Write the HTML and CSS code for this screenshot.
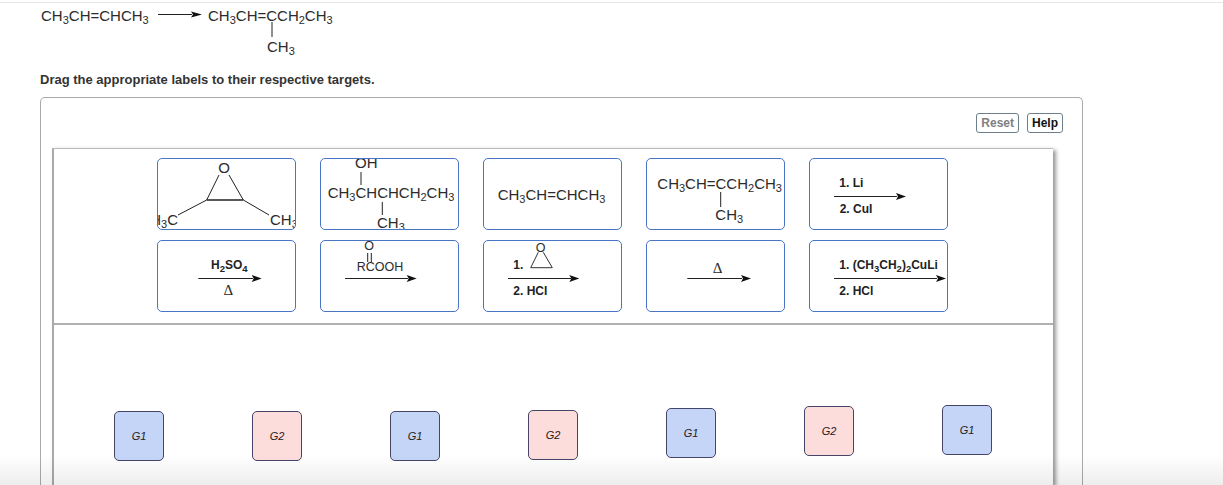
FILE: index.html
```html
<!DOCTYPE html>
<html lang="en">
<head>
    <meta charset="UTF-8">
    <meta name="viewport" content="width=device-width, initial-scale=1.0">
    <title>Drag the appropriate labels to their respective targets</title>
    <link rel="stylesheet" href="styles.css">
</head>
<body>
    <div class="topline"></div>

    <!-- reaction scheme -->
    <svg class="scheme chem" width="340" height="56" viewBox="0 0 340 56">
        <text x="1" y="18">CH<tspan class="sub" dy="3">3</tspan><tspan dy="-3">CH=CHCH</tspan><tspan class="sub" dy="3">3</tspan></text>
        <line x1="118" y1="11.5" x2="152" y2="11.5"/>
        <polygon class="head" points="151,8.5 162,11.5 151,14.5 153,11.5"/>
        <text x="168" y="18">CH<tspan class="sub" dy="3">3</tspan><tspan dy="-3">CH=CCH</tspan><tspan class="sub" dy="3">2</tspan><tspan dy="-3">CH</tspan><tspan class="sub" dy="3">3</tspan></text>
        <line x1="232" y1="19" x2="232" y2="34"/>
        <text x="227" y="49">CH<tspan class="sub" dy="3">3</tspan></text>
    </svg>

    <p class="prompt">Drag the appropriate labels to their respective targets.</p>

    <div class="panel">
        <div class="toolbar">
            <button class="btn btn-off">Reset</button>
            <button class="btn">Help</button>
        </div>

        <div class="board">
            <div class="targets">
                <div class="tile">
                    <svg class="chem" width="137" height="70" viewBox="0 0 137 70">
                        <text x="66" y="14" text-anchor="middle">O</text>
                        <line x1="61" y1="16" x2="48.7" y2="41"/>
                        <line x1="71" y1="16" x2="85.3" y2="41"/>
                        <line class="thick" x1="48.7" y1="41" x2="85.3" y2="41"/>
                        <line x1="48.7" y1="41" x2="20" y2="56"/>
                        <line x1="85.3" y1="41" x2="111" y2="56"/>
                        <text x="20" y="66" text-anchor="end">H<tspan class="sub" dy="3">3</tspan><tspan dy="-3">C</tspan></text>
                        <text x="112" y="66">CH<tspan class="sub" dy="3">3</tspan></text>
                    </svg>
                </div>
                <div class="tile">
                    <svg class="chem" width="137" height="70" viewBox="0 0 137 70">
                        <text x="34" y="9">OH</text>
                        <line x1="40" y1="13" x2="40" y2="26"/>
                        <text x="6.7" y="39">CH<tspan class="sub" dy="3">3</tspan><tspan dy="-3">CHCHCH</tspan><tspan class="sub" dy="3">2</tspan><tspan dy="-3">CH</tspan><tspan class="sub" dy="3">3</tspan></text>
                        <line x1="61.3" y1="43" x2="61.3" y2="56"/>
                        <text x="56" y="69">CH<tspan class="sub" dy="3">3</tspan></text>
                    </svg>
                </div>
                <div class="tile">
                    <svg class="chem" width="137" height="70" viewBox="0 0 137 70">
                        <text x="13.7" y="41">CH<tspan class="sub" dy="3">3</tspan><tspan dy="-3">CH=CHCH</tspan><tspan class="sub" dy="3">3</tspan></text>
                    </svg>
                </div>
                <div class="tile">
                    <svg class="chem" width="137" height="70" viewBox="0 0 137 70">
                        <text x="10.3" y="30">CH<tspan class="sub" dy="3">3</tspan><tspan dy="-3">CH=CCH</tspan><tspan class="sub" dy="3">2</tspan><tspan dy="-3">CH</tspan><tspan class="sub" dy="3">3</tspan></text>
                        <line x1="73.7" y1="33" x2="73.7" y2="48"/>
                        <text x="68.3" y="61">CH<tspan class="sub" dy="3">3</tspan></text>
                    </svg>
                </div>
                <div class="tile">
                    <svg class="chem" width="137" height="70" viewBox="0 0 137 70">
                        <text class="reagent" x="29.3" y="28">1. Li</text>
                        <line x1="24" y1="37.5" x2="87" y2="37.5"/>
                        <polygon class="head" points="86,34 96,37.5 86,41 88,37.5"/>
                        <text class="reagent" x="29.7" y="54">2. CuI</text>
                    </svg>
                </div>

                <div class="tile">
                    <svg class="chem" width="137" height="70" viewBox="0 0 137 70">
                        <text class="reagent" x="53" y="28">H<tspan class="sub-b" dy="3">2</tspan><tspan dy="-3">SO</tspan><tspan class="sub-b" dy="3">4</tspan></text>
                        <line x1="40.3" y1="37.5" x2="95" y2="37.5"/>
                        <polygon class="head" points="93.7,34 103.7,37.5 93.7,41 95.7,37.5"/>
                        <text class="delta" x="70.3" y="54" text-anchor="middle">Δ</text>
                    </svg>
                </div>
                <div class="tile">
                    <svg class="chem" width="137" height="70" viewBox="0 0 137 70">
                        <text class="acid" x="48" y="8.5" text-anchor="middle">O</text>
                        <line x1="46.7" y1="12" x2="46.7" y2="21"/>
                        <line x1="50.3" y1="12" x2="50.3" y2="21"/>
                        <text class="acid" x="35.7" y="29.7">RCOOH</text>
                        <line x1="24" y1="37.5" x2="87" y2="37.5"/>
                        <polygon class="head" points="85.7,34 95.7,37.5 85.7,41 87.7,37.5"/>
                    </svg>
                </div>
                <div class="tile">
                    <svg class="chem" width="137" height="70" viewBox="0 0 137 70">
                        <text class="reagent" x="29.3" y="28">1.</text>
                        <text class="acid" x="56.7" y="10.7" text-anchor="middle">O</text>
                        <polyline class="ring" points="54.3,11.3 46.7,26.7 68.3,26.7 59.3,11.3"/>
                        <line x1="24" y1="37.5" x2="87" y2="37.5"/>
                        <polygon class="head" points="85.3,34 95.3,37.5 85.3,41 87.3,37.5"/>
                        <text class="reagent" x="29.3" y="54">2. HCl</text>
                    </svg>
                </div>
                <div class="tile">
                    <svg class="chem" width="137" height="70" viewBox="0 0 137 70">
                        <text class="delta" x="70.6" y="31.7" text-anchor="middle">Δ</text>
                        <line x1="40.3" y1="37.5" x2="95" y2="37.5"/>
                        <polygon class="head" points="94,34 104,37.5 94,41 96,37.5"/>
                    </svg>
                </div>
                <div class="tile">
                    <svg class="chem" width="137" height="70" viewBox="0 0 137 70">
                        <text class="reagent" x="29.3" y="28">1. (CH<tspan class="sub-b" dy="3">3</tspan><tspan dy="-3">CH</tspan><tspan class="sub-b" dy="3">2</tspan><tspan dy="-3">)</tspan><tspan class="sub-b" dy="3">2</tspan><tspan dy="-3">CuLi</tspan></text>
                        <line x1="24" y1="37.5" x2="127" y2="37.5"/>
                        <polygon class="head" points="126,34 136,37.5 126,41 128,37.5"/>
                        <text class="reagent" x="29.3" y="54">2. HCl</text>
                    </svg>
                </div>
            </div>

            <div class="tray">
                <div class="token g1">G1</div>
                <div class="token g2">G2</div>
                <div class="token g1">G1</div>
                <div class="token g2 up1">G2</div>
                <div class="token g1 up3">G1</div>
                <div class="token g2 up5">G2</div>
                <div class="token g1 up6">G1</div>
            </div>
        </div>
    </div>

    <div class="fade"></div>
</body>
</html>
```

FILE: styles.css
```css
html, body {
    height: 485px;
    overflow: hidden;
}
body {
    position: relative;
    margin: 0;
    padding-top: 2px;
    box-sizing: border-box;
    background-color: #fff;
    font-family: "Liberation Sans", Arial, sans-serif;
    color: #222;
}
.topline {
    height: 1px;
    background-color: #e6e6e6;
}
.scheme {
    display: block;
    margin-left: 40px;
}
.prompt {
    margin: 13px 0 0 40px;
    height: 25px;
    font-size: 13px;
    font-weight: bold;
    line-height: 16px;
    color: #333;
}

/* chemistry drawings */
.chem {
    display: block;
    font-family: "Liberation Sans", Arial, sans-serif;
    font-size: 15px;
}
.chem text {
    fill: #2b2b2b;
}
.chem line {
    stroke: #222;
    stroke-width: 1;
}
.chem .thick {
    stroke-width: 1.5;
}
.chem .ring {
    fill: none;
    stroke: #333;
    stroke-width: 1;
}
.chem .head {
    fill: #111;
}
.sub {
    font-size: 11px;
}
.sub-b {
    font-size: 9.5px;
}
.chem .reagent {
    font-size: 12px;
    font-weight: bold;
    fill: #222;
}
.chem .acid {
    font-size: 12.5px;
}
.chem .delta {
    font-family: "Liberation Serif", serif;
    font-size: 15px;
}

/* question panel */
.panel {
    margin-left: 40px;
    width: 1043px;
    height: 388px;
    box-sizing: border-box;
    border: 1px solid #aaa;
    border-bottom: none;
    border-radius: 5px 5px 0 0;
}
.toolbar {
    display: flex;
    justify-content: flex-end;
    gap: 8px;
    height: 50px;
    padding: 15px 19px 0 0;
    box-sizing: border-box;
}
.btn {
    height: 20px;
    padding: 0 4px;
    border: 1px solid #6d7f8c;
    border-radius: 3px;
    background-color: #fff;
    font-family: "Liberation Sans", Arial, sans-serif;
    font-size: 12px;
    font-weight: bold;
    color: #111;
}
.btn-off {
    color: #808080;
}
.board {
    margin-left: 11px;
    width: 1001px;
    height: 337px;
    box-sizing: border-box;
    border-top: 1px solid #bbb;
    border-left: 2px solid #aaa;
    box-shadow: 3px 2px 4px #999;
    background-color: #fff;
}
.targets {
    display: grid;
    grid-template-columns: repeat(5, 139px);
    gap: 10px 24px;
    padding: 9px 0 11px 103px;
    border-bottom: 2px solid #b0b0b0;
}
.tile {
    height: 72px;
    box-sizing: border-box;
    border: 1px solid #4a74c4;
    border-radius: 5px;
    background-color: #fff;
    overflow: hidden;
}

/* draggable labels */
.tray {
    display: flex;
    align-items: flex-start;
    gap: 88px;
    padding: 86px 0 0 60px;
}
.token {
    display: flex;
    align-items: center;
    justify-content: center;
    flex: none;
    width: 50px;
    height: 50px;
    box-sizing: border-box;
    border: 1px solid #45456a;
    border-radius: 5px;
    font-size: 11px;
    font-style: italic;
    color: #222;
}
.g1 {
    background-color: #c5d5f7;
}
.g2 {
    background-color: #fddcdc;
}
.up1 {
    margin-top: -1px;
}
.up3 {
    margin-top: -3px;
}
.up5 {
    margin-top: -5px;
}
.up6 {
    margin-top: -6px;
}

.fade {
    position: absolute;
    left: 0;
    right: 0;
    bottom: 0;
    height: 30px;
    background: linear-gradient(rgba(0, 0, 0, 0), rgba(0, 0, 0, 0.07));
    pointer-events: none;
}
```
